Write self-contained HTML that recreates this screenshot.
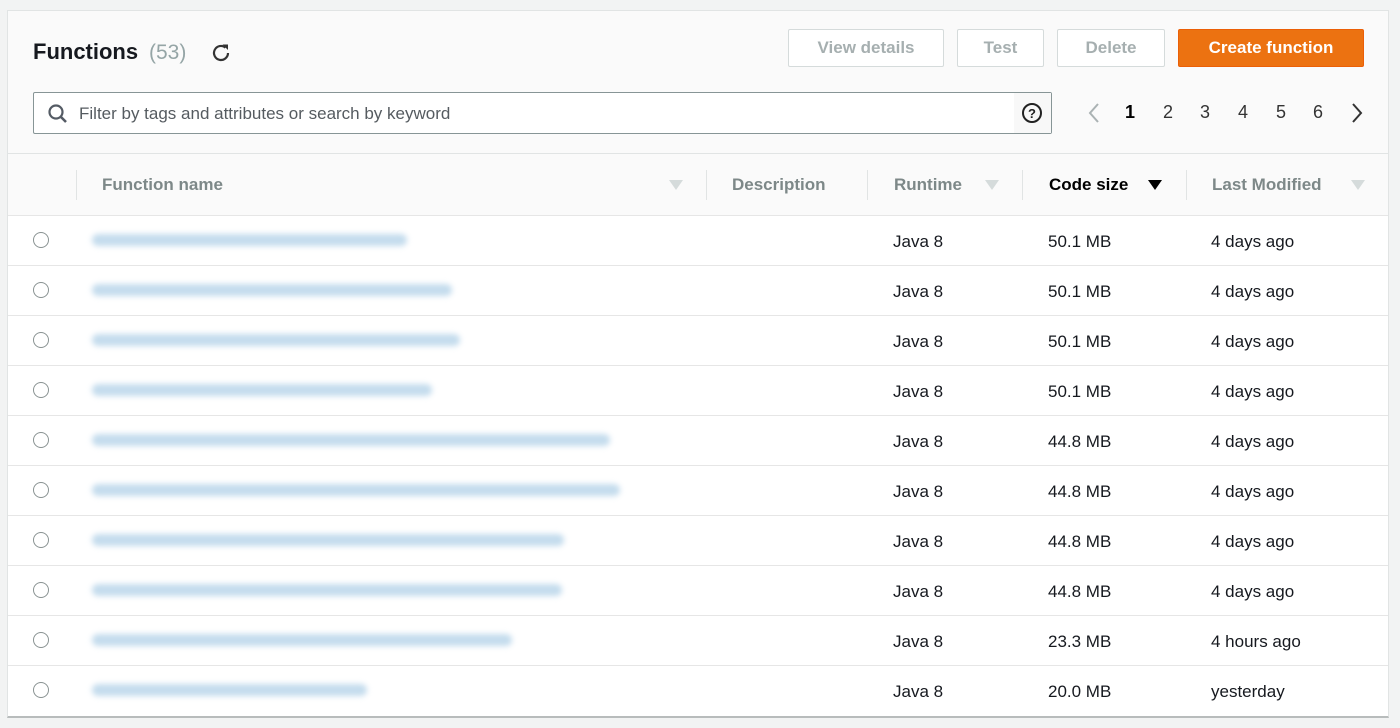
<!DOCTYPE html>
<html><head><style>
*{margin:0;padding:0;box-sizing:border-box}
body{width:1400px;height:728px;background:#f2f3f3;font-family:"Liberation Sans",sans-serif;position:relative;overflow:hidden}
.card{position:absolute;left:7px;top:10px;width:1382px;height:708px;background:#fafafa;border:1px solid #e1e4e4;border-bottom:2px solid #b8bcbc}
.a{position:absolute;white-space:nowrap}
.btn{position:absolute;top:29px;height:38px;border:1px solid #d5dbdb;background:#fff;color:#a6afb0;font-weight:bold;font-size:17px;text-align:center;line-height:36px;border-radius:2px}
.row{position:absolute;left:8px;width:1380px;height:50px;background:#fff;border-top:1px solid #e6e6e6}
.rad{position:absolute;left:25px;top:16px;width:16px;height:16px;border:1px solid #8a9393;border-radius:50%}
.cell{position:absolute;top:16px;font-size:17px;color:#16191f}
.blur{position:absolute;left:84px;top:18px;height:12px;background:#c4dced;filter:blur(3px);border-radius:6px}
.th{position:absolute;top:175px;font-size:17px;font-weight:bold;color:#7d8888}
.sep{position:absolute;top:170px;width:1px;height:30px;background:#e1e4e4}
.tri{position:absolute;top:180px;width:0;height:0;border-left:7px solid transparent;border-right:7px solid transparent;border-top:10px solid #d5dbdb}
.pg{position:absolute;top:102px;font-size:18px;color:#333}
</style></head><body>
<div class="card"></div>
<div class="a" style="left:33px;top:39px;font-size:22px;font-weight:bold;color:#16191f">Functions</div>
<div class="a" style="left:149px;top:41px;font-size:21px;color:#95a5a6">(53)</div>
<svg class="a" style="left:209px;top:41px" width="24" height="24" viewBox="0 0 24 24"><path d="M19 12a7 7 0 1 1-2.5-5.4" fill="none" stroke="#333" stroke-width="2.2"/><path d="M13.5 3.5h5.5v5.5z" fill="#333"/></svg>
<div class="btn" style="left:788px;width:156px">View details</div>
<div class="btn" style="left:957px;width:87px">Test</div>
<div class="btn" style="left:1057px;width:108px">Delete</div>
<div class="btn" style="left:1178px;width:186px;background:#ec7211;border-color:#eb5f07;color:#fff">Create function</div>
<div class="a" style="left:33px;top:92px;width:1019px;height:42px;background:#fff;border:1px solid #879596;border-radius:2px"></div>
<svg class="a" style="left:47px;top:103px" width="22" height="22" viewBox="0 0 22 22"><circle cx="9" cy="9" r="6.5" fill="none" stroke="#545b64" stroke-width="2.2"/><path d="M13.5 13.5l5.5 5.5" stroke="#545b64" stroke-width="2.6"/></svg>
<div class="a" style="left:79px;top:104px;font-size:17px;color:#555b60">Filter by tags and attributes or search by keyword</div>
<div class="a" style="left:1014px;top:93px;width:37px;height:40px;background:#f8f8f8"></div>
<svg class="a" style="left:1021px;top:102px" width="22" height="22" viewBox="0 0 22 22"><circle cx="11" cy="11" r="9" fill="none" stroke="#222" stroke-width="2"/><text x="11" y="16" font-size="13" font-weight="bold" text-anchor="middle" font-family="Liberation Sans" fill="#222">?</text></svg>
<svg class="a" style="left:1087px;top:102px" width="14" height="22"><path d="M11 2L3 11l8 9" fill="none" stroke="#aab2b3" stroke-width="2"/></svg>
<div class="pg" style="left:1125px;font-weight:bold;color:#000">1</div>
<div class="pg" style="left:1163px">2</div>
<div class="pg" style="left:1200px">3</div>
<div class="pg" style="left:1238px">4</div>
<div class="pg" style="left:1276px">5</div>
<div class="pg" style="left:1313px">6</div>
<svg class="a" style="left:1350px;top:102px" width="14" height="22"><path d="M3 2l8 9-8 9" fill="none" stroke="#333" stroke-width="2"/></svg>
<div class="a" style="left:8px;top:153px;width:1380px;height:1px;background:#e1e4e4"></div>
<div class="sep" style="left:76px"></div><div class="sep" style="left:706px"></div><div class="sep" style="left:867px"></div><div class="sep" style="left:1022px"></div><div class="sep" style="left:1186px"></div>
<div class="th" style="left:102px">Function name</div><div class="tri" style="left:669px"></div>
<div class="th" style="left:732px">Description</div>
<div class="th" style="left:894px">Runtime</div><div class="tri" style="left:985px"></div>
<div class="th" style="left:1049px;color:#000">Code size</div><div class="tri" style="left:1148px;border-top-color:#000"></div>
<div class="th" style="left:1212px">Last Modified</div><div class="tri" style="left:1351px"></div>
<div class="row" style="top:215px"><div class="rad"></div><div class="blur" style="width:315px"></div><div class="cell" style="left:885px">Java 8</div><div class="cell" style="left:1040px">50.1 MB</div><div class="cell" style="left:1203px">4 days ago</div></div>
<div class="row" style="top:265px"><div class="rad"></div><div class="blur" style="width:360px"></div><div class="cell" style="left:885px">Java 8</div><div class="cell" style="left:1040px">50.1 MB</div><div class="cell" style="left:1203px">4 days ago</div></div>
<div class="row" style="top:315px"><div class="rad"></div><div class="blur" style="width:368px"></div><div class="cell" style="left:885px">Java 8</div><div class="cell" style="left:1040px">50.1 MB</div><div class="cell" style="left:1203px">4 days ago</div></div>
<div class="row" style="top:365px"><div class="rad"></div><div class="blur" style="width:340px"></div><div class="cell" style="left:885px">Java 8</div><div class="cell" style="left:1040px">50.1 MB</div><div class="cell" style="left:1203px">4 days ago</div></div>
<div class="row" style="top:415px"><div class="rad"></div><div class="blur" style="width:518px"></div><div class="cell" style="left:885px">Java 8</div><div class="cell" style="left:1040px">44.8 MB</div><div class="cell" style="left:1203px">4 days ago</div></div>
<div class="row" style="top:465px"><div class="rad"></div><div class="blur" style="width:528px"></div><div class="cell" style="left:885px">Java 8</div><div class="cell" style="left:1040px">44.8 MB</div><div class="cell" style="left:1203px">4 days ago</div></div>
<div class="row" style="top:515px"><div class="rad"></div><div class="blur" style="width:472px"></div><div class="cell" style="left:885px">Java 8</div><div class="cell" style="left:1040px">44.8 MB</div><div class="cell" style="left:1203px">4 days ago</div></div>
<div class="row" style="top:565px"><div class="rad"></div><div class="blur" style="width:470px"></div><div class="cell" style="left:885px">Java 8</div><div class="cell" style="left:1040px">44.8 MB</div><div class="cell" style="left:1203px">4 days ago</div></div>
<div class="row" style="top:615px"><div class="rad"></div><div class="blur" style="width:420px"></div><div class="cell" style="left:885px">Java 8</div><div class="cell" style="left:1040px">23.3 MB</div><div class="cell" style="left:1203px">4 hours ago</div></div>
<div class="row" style="top:665px;height:51px"><div class="rad"></div><div class="blur" style="width:275px"></div><div class="cell" style="left:885px">Java 8</div><div class="cell" style="left:1040px">20.0 MB</div><div class="cell" style="left:1203px">yesterday</div></div>
</body></html>
